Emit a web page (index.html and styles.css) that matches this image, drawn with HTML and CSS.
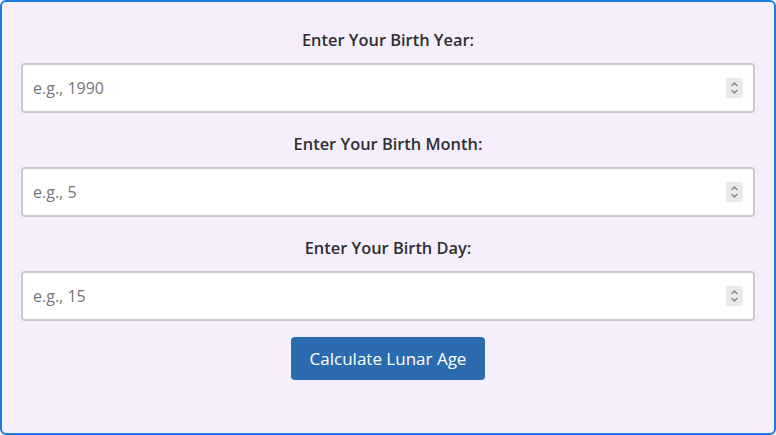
FILE: index.html
```html
<!DOCTYPE html>
<html>
<head>
<meta charset="utf-8">
<title>Lunar Age Calculator</title>
<link rel="stylesheet" href="styles.css">
</head>
<body>
    <div class="calculator">
        <label for="year">Enter Your Birth Year:</label>
        <div class="field">
            <input type="number" id="year" placeholder="e.g., 1990">
            <span class="spin"><svg width="9" height="14" viewBox="0 0 9 14"><path d="M1.5 5 L4.5 2 L7.5 5 M1.5 9 L4.5 12 L7.5 9" fill="none" stroke="#777" stroke-width="1.1"/></svg></span>
        </div>

        <label for="month">Enter Your Birth Month:</label>
        <div class="field">
            <input type="number" id="month" placeholder="e.g., 5">
            <span class="spin"><svg width="9" height="14" viewBox="0 0 9 14"><path d="M1.5 5 L4.5 2 L7.5 5 M1.5 9 L4.5 12 L7.5 9" fill="none" stroke="#777" stroke-width="1.1"/></svg></span>
        </div>

        <label for="day">Enter Your Birth Day:</label>
        <div class="field">
            <input type="number" id="day" placeholder="e.g., 15">
            <span class="spin"><svg width="9" height="14" viewBox="0 0 9 14"><path d="M1.5 5 L4.5 2 L7.5 5 M1.5 9 L4.5 12 L7.5 9" fill="none" stroke="#777" stroke-width="1.1"/></svg></span>
        </div>

        <button class="calc-btn">Calculate Lunar Age</button>
    </div>
</body>
</html>
```

FILE: styles.css
```css
html, body {
    margin: 0;
    padding: 0;
    height: 100%;
}

body {
    font-family: "Open Sans", "Noto Sans", sans-serif;
    color: #333;
}

.calculator {
    box-sizing: border-box;
    height: 435px;
    background: #f5eefd;
    border: 2px solid #1a7ae0;
    border-radius: 6px;
    padding: 26px 19px 0 19px;
    display: flex;
    flex-direction: column;
    align-items: stretch;
}

.calculator label {
    display: block;
    text-align: center;
    font-weight: 600;
    font-size: 16.4px;
    line-height: 24px;
    margin-bottom: 11px;
    color: #2f2f2f;
}

.field {
    position: relative;
    margin-bottom: 19px;
}

.field input[type="number"] {
    box-sizing: border-box;
    display: block;
    height: 50px;
    width: 100%;
    padding: 0 10px;
    font-family: inherit;
    font-size: 16px;
    color: #333;
    background: #fff;
    border: 2px solid #cbcbcb;
    border-radius: 4px;
    outline: none;
    -moz-appearance: textfield;
}

.field input::-webkit-inner-spin-button,
.field input::-webkit-outer-spin-button {
    -webkit-appearance: none;
    margin: 0;
}

.field input::placeholder {
    color: #777;
}

.spin {
    position: absolute;
    right: 12px;
    top: 15px;
    width: 17px;
    height: 20px;
    background: #ebebeb;
    display: flex;
    align-items: center;
    justify-content: center;
}

.calc-btn {
    align-self: center;
    margin-top: -3px;
    width: 194px;
    height: 43px;
    background: #2b6cb0;
    color: #fff;
    border: none;
    border-radius: 4px;
    font-family: inherit;
    font-size: 17px;
    cursor: pointer;
}
```
